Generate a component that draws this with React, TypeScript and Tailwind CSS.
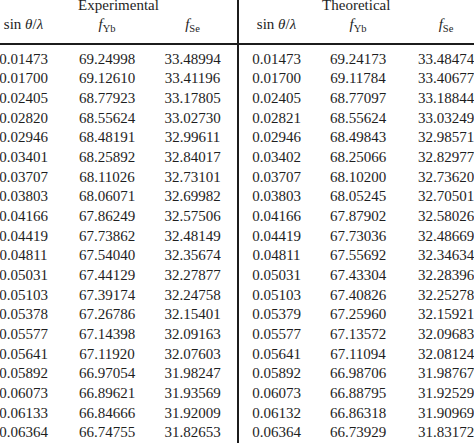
import React from 'react';

// Tabela de fatores de espalhamento: experimental x teórico
type Linha = [string, string, string];

const experimental: Linha[] = [
  ['0.01473', '69.24998', '33.48994'],
  ['0.01700', '69.12610', '33.41196'],
  ['0.02405', '68.77923', '33.17805'],
  ['0.02820', '68.55624', '33.02730'],
  ['0.02946', '68.48191', '32.99611'],
  ['0.03401', '68.25892', '32.84017'],
  ['0.03707', '68.11026', '32.73101'],
  ['0.03803', '68.06071', '32.69982'],
  ['0.04166', '67.86249', '32.57506'],
  ['0.04419', '67.73862', '32.48149'],
  ['0.04811', '67.54040', '32.35674'],
  ['0.05031', '67.44129', '32.27877'],
  ['0.05103', '67.39174', '32.24758'],
  ['0.05378', '67.26786', '32.15401'],
  ['0.05577', '67.14398', '32.09163'],
  ['0.05641', '67.11920', '32.07603'],
  ['0.05892', '66.97054', '31.98247'],
  ['0.06073', '66.89621', '31.93569'],
  ['0.06133', '66.84666', '31.92009'],
  ['0.06364', '66.74755', '31.82653'],
];

const teorico: Linha[] = [
  ['0.01473', '69.24173', '33.48474'],
  ['0.01700', '69.11784', '33.40677'],
  ['0.02405', '68.77097', '33.18844'],
  ['0.02821', '68.55624', '33.03249'],
  ['0.02946', '68.49843', '32.98571'],
  ['0.03402', '68.25066', '32.82977'],
  ['0.03707', '68.10200', '32.73620'],
  ['0.03803', '68.05245', '32.70501'],
  ['0.04166', '67.87902', '32.58026'],
  ['0.04419', '67.73036', '32.48669'],
  ['0.04811', '67.55692', '32.34634'],
  ['0.05031', '67.43304', '32.28396'],
  ['0.05103', '67.40826', '32.25278'],
  ['0.05379', '67.25960', '32.15921'],
  ['0.05577', '67.13572', '32.09683'],
  ['0.05641', '67.11094', '32.08124'],
  ['0.05892', '66.98706', '31.98767'],
  ['0.06073', '66.88795', '31.92529'],
  ['0.06132', '66.86318', '31.90969'],
  ['0.06364', '66.73929', '31.83172'],
];

function F({ sub }: { sub: string }) {
  return (
    <span>
      <i>f</i>
      <span className="relative top-[3px] text-[10.5px] not-italic">{sub}</span>
    </span>
  );
}

function Metade({
  titulo,
  linhas,
  cols,
  offset,
}: {
  titulo: string;
  linhas: Linha[];
  cols: string;
  offset: string;
}) {
  return (
    <div className="flex flex-col overflow-hidden">
      {/* Cabeçalho */}
      <div className="h-[43px] flex flex-col">
        <div className="h-[16px] -mt-[3px] leading-[16px] text-center">{titulo}</div>
        <div className={`grid ${cols} ${offset} pt-[2.5px] leading-[16px] text-center`}>
          <span>
            sin <i>θ</i>/<i>λ</i>
          </span>
          <F sub="Yb" />
          <F sub="Se" />
        </div>
      </div>
      <div className="h-[1.5px] bg-[#1c1c1c]" />

      {/* Dados */}
      <div className="pt-[5px]">
        {linhas.map((l, i) => (
          <div key={i} className={`grid ${cols} ${offset} h-[19.68px] leading-[19.68px] text-center`}>
            <span>{l[0]}</span>
            <span>{l[1]}</span>
            <span>{l[2]}</span>
          </div>
        ))}
      </div>
    </div>
  );
}

export default function App() {
  return (
    <div
      className="w-[474px] h-[443px] overflow-hidden bg-white text-[#1e1e1e] text-[15px] flex"
      style={{ fontFamily: '"Liberation Serif", "Times New Roman", serif' }}
    >
      <div className="w-[237px] shrink-0">
        <Metade
          titulo="Experimental"
          linhas={experimental}
          cols="grid-cols-[85px_82px_89px]"
          offset="-ml-[19px]"
        />
      </div>
      <div className="w-[1.5px] shrink-0 bg-[#1c1c1c] h-full" />
      <div className="flex-1 min-w-0">
        <Metade
          titulo="Theoretical"
          linhas={teorico}
          cols="grid-cols-[84px_79px_97px]"
          offset="-ml-[4px]"
        />
      </div>
    </div>
  );
}
